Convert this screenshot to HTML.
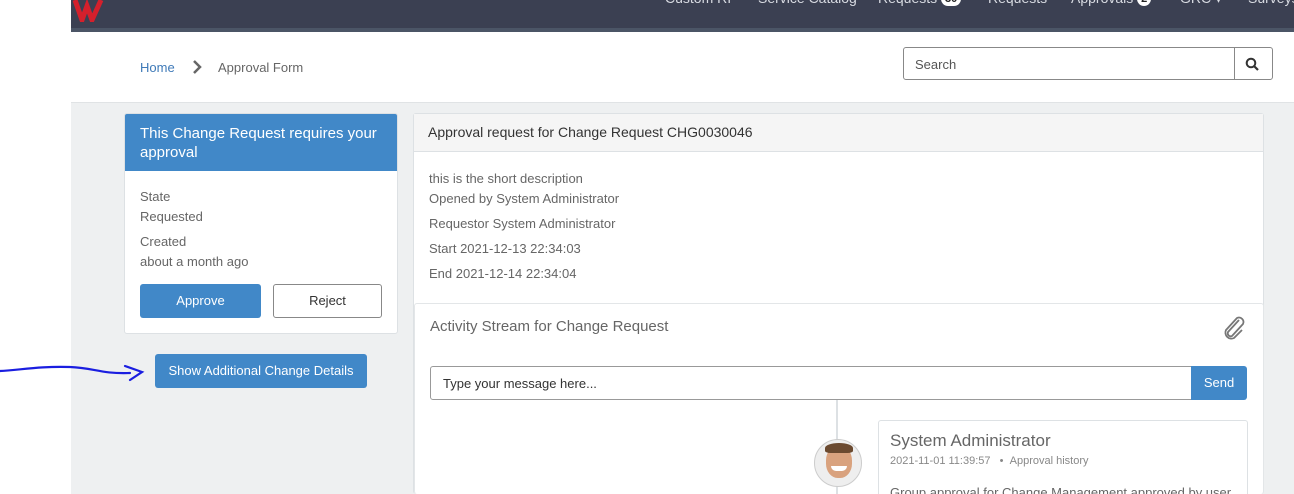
<!DOCTYPE html>
<html style="width:1294px;height:494px;overflow:hidden"><head><meta charset="utf-8"><style>
*{box-sizing:border-box;margin:0;padding:0}
body{width:1294px;height:494px;overflow:hidden;background:#fff;font-family:"Liberation Sans",sans-serif;position:relative;color:#555}
.abs{position:absolute}
.nav{left:71px;top:0;width:1223px;height:28px;background:#3b4052}
.strip{left:71px;top:28px;width:1223px;height:4px;background:#4b5566}
.navt{top:-10px;color:#d8dbe2;font-size:14px;white-space:nowrap}
.badge{display:inline-block;background:#fff;color:#222;border-radius:9px;font-size:11px;padding:1px 4px;font-weight:bold;vertical-align:middle}
.bg{left:71px;top:102px;width:1223px;height:392px;background:#eef0f1;border-top:1px solid #e0e3e5}
.card{background:#fff;border:1px solid #dde1e4;border-radius:3px}
.btn{position:absolute;background:#4188c8;color:#fff;font-size:13px;text-align:center;border-radius:3px}
</style></head><body>
<div class="abs nav"></div><div class="abs strip"></div>
<svg class="abs" style="left:71px;top:0" width="36" height="22"><path d="M4 0 L11 20 L16 6 L21 20 L30 0" fill="none" stroke="#d4202c" stroke-width="5"/></svg>
<div class="abs navt" style="left:665px">Custom RI</div>
<div class="abs navt" style="left:758px">Service Catalog</div>
<div class="abs navt" style="left:878px">Requests <span class="badge">30</span></div>
<div class="abs navt" style="left:988px">Requests</div>
<div class="abs navt" style="left:1071px">Approvals <span class="badge">2</span></div>
<div class="abs navt" style="left:1180px">GRC ▾</div>
<div class="abs navt" style="left:1248px">Surveys</div>

<div class="abs" style="left:140px;top:60px;font-size:13px;color:#3f7ab8">Home</div>
<svg class="abs" style="left:192px;top:60px" width="10" height="14"><path d="M2 1 L8 7 L2 13" fill="none" stroke="#666" stroke-width="2.5"/></svg>
<div class="abs" style="left:218px;top:60px;font-size:13px;color:#666">Approval Form</div>
<div class="abs" style="left:903px;top:47px;width:370px;height:33px;border:1px solid #888;border-radius:3px;background:#fff"></div>
<div class="abs" style="left:1234px;top:47px;width:1px;height:33px;background:#888"></div>
<div class="abs" style="left:915px;top:57px;font-size:13px;color:#555">Search</div>
<svg class="abs" style="left:1245px;top:57px" width="14" height="14"><circle cx="6" cy="6" r="4.3" fill="none" stroke="#333" stroke-width="2"/><line x1="9" y1="9" x2="13" y2="13" stroke="#333" stroke-width="2.2"/></svg>

<div class="abs bg"></div>
<div class="abs card" style="left:124px;top:113px;width:274px;height:221px;overflow:hidden">
<div style="background:#4188c8;height:57px;color:#fff;font-size:15px;padding:10px 15px;line-height:19px">This Change Request requires your approval</div>
<div style="padding:16px 15px 0;font-size:13px;line-height:20px;color:#666">State<br>Requested<div style="height:5px"></div>Created<br>about a month ago</div>
</div>
<div class="btn" style="left:140px;top:284px;width:121px;height:34px;line-height:34px">Approve</div>
<div class="abs" style="left:273px;top:284px;width:109px;height:34px;line-height:32px;border:1px solid #888;border-radius:3px;text-align:center;font-size:13px;color:#333">Reject</div>
<div class="btn" style="left:155px;top:354px;width:212px;height:34px;line-height:34px">Show Additional Change Details</div>
<svg class="abs" style="left:0;top:358px" width="150" height="26"><path d="M0 13 C20 12 40 8 70 9 C95 10 100 16 130 15 M125 8 L142 14 L130 22" fill="none" stroke="#1a1ee0" stroke-width="2.2" stroke-linecap="round"/></svg>

<div class="abs card" style="left:413px;top:113px;width:851px;height:381px;border-bottom:none"></div>
<div class="abs" style="left:414px;top:114px;width:849px;height:38px;background:#f5f5f5;border-bottom:1px solid #dde1e4"></div>
<div class="abs" style="left:428px;top:124px;font-size:14px;color:#333">Approval request for Change Request CHG0030046</div>
<div class="abs" style="left:429px;top:169px;font-size:13px;line-height:20px;color:#666">this is the short description<br>Opened by System Administrator
<div style="margin-top:5px">Requestor System Administrator</div><div style="margin-top:5px">Start 2021-12-13 22:34:03</div><div style="margin-top:5px">End 2021-12-14 22:34:04</div></div>
<div class="abs card" style="left:414px;top:303px;width:850px;height:191px;border-color:#e3e6e8;border-bottom:none"></div>
<div class="abs" style="left:430px;top:318px;font-size:15px;color:#666">Activity Stream for Change Request</div>
<svg class="abs" style="left:1220px;top:314px" width="28" height="28"><path d="M19 6 L8 18 a3 3 0 0 0 4 4 L23 10 a4.5 4.5 0 0 0-6-6 L6 16 a6 6 0 0 0 8 8 L22 16" fill="none" stroke="#777" stroke-width="1.8"/></svg>
<div class="abs" style="left:430px;top:366px;width:762px;height:34px;border:1px solid #999;border-radius:3px 0 0 3px;background:#fff"></div>
<div class="abs" style="left:443px;top:376px;font-size:13px;color:#333">Type your message here...</div>
<div class="btn" style="left:1191px;top:366px;width:56px;height:34px;line-height:34px;border-radius:0 3px 3px 0">Send</div>
<div class="abs" style="left:836px;top:400px;width:2px;height:94px;background:#dde1e4"></div>
<div class="abs" style="left:814px;top:439px;width:48px;height:48px;border-radius:50%;background:#eee;border:1px solid #ccc;overflow:hidden">
<div style="position:absolute;left:11px;top:6px;width:26px;height:32px;border-radius:45%;background:#d9a27e"></div>
<div style="position:absolute;left:10px;top:3px;width:28px;height:10px;border-radius:50% 50% 20% 20%;background:#6b4a30"></div>
<div style="position:absolute;left:16px;top:26px;width:16px;height:5px;border-radius:0 0 8px 8px;background:#fff"></div></div>
<div class="abs" style="left:878px;top:420px;width:370px;height:80px;background:#fff;border:1px solid #dde1e4;border-radius:3px"></div>
<div class="abs" style="left:890px;top:431px;font-size:17px;color:#666">System Administrator</div>
<div class="abs" style="left:890px;top:455px;font-size:11px;color:#888">2021-11-01 11:39:57 &nbsp; • &nbsp;Approval history</div>
<div class="abs" style="left:890px;top:485px;font-size:13px;color:#666">Group approval for Change Management approved by user</div>
</body></html>
